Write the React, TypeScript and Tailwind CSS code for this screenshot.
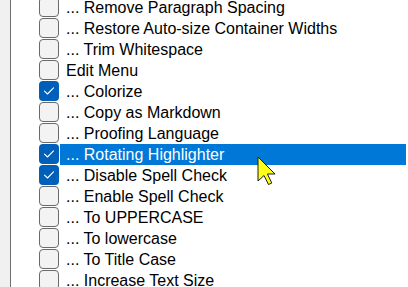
import React from "react";

type Item = { label: string; checked?: boolean; selected?: boolean };

const items: Item[] = [
  { label: "... Remove Paragraph Spacing" },
  { label: "... Restore Auto-size Container Widths" },
  { label: "... Trim Whitespace" },
  { label: "Edit Menu" },
  { label: "... Colorize", checked: true },
  { label: "... Copy as Markdown" },
  { label: "... Proofing Language" },
  { label: "... Rotating Highlighter", checked: true, selected: true },
  { label: "... Disable Spell Check", checked: true },
  { label: "... Enable Spell Check" },
  { label: "... To UPPERCASE" },
  { label: "... To lowercase" },
  { label: "... To Title Case" },
  { label: "... Increase Text Size" },
];

function Checkbox({ checked }: { checked?: boolean }) {
  if (checked) {
    return (
      <div className="w-[20px] h-[20px] shrink-0 rounded-[4px] bg-[#005fb8] flex items-center justify-center">
        <svg width="12" height="10" viewBox="0 0 12 10" fill="none">
          <path d="M1.5 5.2 L4.5 8 L10.5 1.8" stroke="white" strokeWidth="1.1" strokeLinecap="round" strokeLinejoin="round" />
        </svg>
      </div>
    );
  }
  return <div className="w-[20px] h-[20px] shrink-0 rounded-[4px] border border-[#6a6a6a] bg-[#f3f3f3]" />;
}

function Cursor() {
  return (
    <svg className="absolute left-[257px] top-[156px]" width="20" height="30" viewBox="-1 -1 20 30">
      <path
        d="M0 0 L0 24 L6 18.5 L10.5 27.5 L13.8 26 L9.4 17 L17 17 Z"
        fill="#ffff1a"
        stroke="#1a1a1a"
        strokeWidth="1"
        strokeLinejoin="miter"
      />
    </svg>
  );
}

export default function App() {
  return (
    <div className="relative w-[408px] h-[287px] overflow-hidden bg-white flex font-['Liberation_Sans',Arial,sans-serif] text-[16px] text-black">
      <div className="w-[11px] shrink-0 bg-[#f0f0f0] border-r border-[#6e6e6e]" />
      <div className="flex-1 flex flex-col -mt-[3px] pl-[28px]">
        {items.map((it) => (
          <div key={it.label} className="h-[21px] shrink-0 flex items-start">
            <Checkbox checked={it.checked} />
            <div
              className={
                it.selected
                  ? "ml-[1px] mr-[2px] flex-1 h-[21px] bg-[#0078d7] text-white pl-[6px] leading-[21px] whitespace-nowrap"
                  : "ml-[1px] mr-[2px] flex-1 h-[21px] pl-[6px] leading-[21px] whitespace-nowrap"
              }
            >
              {it.label}
            </div>
          </div>
        ))}
      </div>
      <Cursor />
    </div>
  );
}
